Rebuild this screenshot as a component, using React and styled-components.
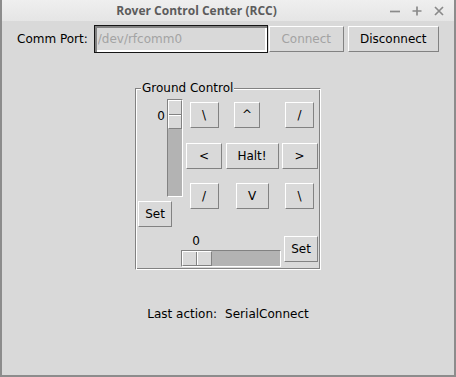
import React from "react";
import styled, { createGlobalStyle } from "styled-components";

const GlobalStyle = createGlobalStyle`
  body {
    margin: 0;
    background: #d9d9d9;
    font-family: "DejaVu Sans", sans-serif;
  }
`;

const Window = styled.div`
  box-sizing: border-box;
  width: 456px;
  height: 377px;
  border: 2px solid #8c8c8c;
  border-top: none;
  background: #d9d9d9;
  display: flex;
  flex-direction: column;
`;

const TitleBar = styled.div`
  height: 21px;
  display: grid;
  grid-template-columns: 1fr 66px;
  align-items: center;
  padding-right: 4px;
  background: linear-gradient(#efefef, #e5e5e5);
`;

const Title = styled.div`
  padding-left: 7px;
  text-align: center;
  font: bold 12px "Open Sans", sans-serif;
  color: #5c5c5c;
`;

const WinControls = styled.div`
  display: flex;
`;

const WinButton = styled.div`
  width: 22px;
  height: 21px;
  display: flex;
  align-items: center;
  justify-content: center;
  color: #8a8a8a;
`;

const TopRow = styled.div`
  display: flex;
  align-items: center;
  height: 28px;
  padding: 4px 0 0 15px;
`;

const Label = styled.span`
  font-size: 12px;
  line-height: 14px;
  color: #000;
  margin-right: ${p => p.$gap || 0}px;
`;

const PortEntry = styled.input`
  box-sizing: border-box;
  width: 174px;
  height: 28px;
  margin: 0;
  padding: 0 0 0 3px;
  font: 12px "DejaVu Sans", sans-serif;
  color: #a3a3a3;
  background: #d9d9d9;
  border: 1px solid #151515;
  box-shadow: inset 2px 2px 0 #828282, inset -2px -2px 0 #fff;
  outline: none;
  &:disabled {
    color: #a3a3a3;
  }
`;

const TkButton = styled.button`
  box-sizing: border-box;
  width: ${p => p.$w}px;
  height: 26px;
  margin: 0 0 0 ${p => p.$ml || 0}px;
  padding: 0;
  font: 12px "DejaVu Sans", sans-serif;
  color: #000;
  background: #d9d9d9;
  border: 1px solid;
  border-color: #fff #828282 #828282 #fff;
  &:disabled {
    color: #a3a3a3;
  }
`;

const GroupFrame = styled.div`
  position: relative;
  box-sizing: border-box;
  width: 186px;
  height: 182px;
  margin: 35px auto 0;
  padding: 10px 1px 1px 1px;
  border: 1px solid;
  border-color: #828282 #fff #fff #828282;
  box-shadow: inset 1px 1px 0 #fff, inset -1px -1px 0 #828282;
  display: grid;
  grid-template-columns: 47px 40px 56px 39px;
  grid-template-rows: 32px 50px 30px 18px 39px;
`;

const Legend = styled.span`
  position: absolute;
  left: 5px;
  top: -8px;
  padding: 0 1px;
  background: #d9d9d9;
  font-size: 12px;
  line-height: 14px;
`;

const Cell = styled.div`
  display: flex;
  grid-column: ${p => p.$col};
  grid-row: ${p => p.$row};
  justify-self: ${p => p.$jx || "center"};
  align-self: ${p => p.$jy || "center"};
  margin: ${p => p.$m || "0"};
`;

const Scale = styled.div`
  display: flex;
  flex-direction: ${p => (p.$vertical ? "row" : "column")};
  align-items: flex-start;
  gap: 2px;
`;

const ValueLabel = styled.span`
  width: ${p => (p.$vertical ? "auto" : "30px")};
  margin-top: ${p => (p.$vertical ? 10 : 0)}px;
  text-align: center;
  font-size: 12px;
  line-height: 14px;
`;

const Trough = styled.div`
  box-sizing: border-box;
  width: ${p => (p.$vertical ? 16 : 100)}px;
  height: ${p => (p.$vertical ? 98 : 17)}px;
  background: #b3b3b3;
  border: 1px solid;
  border-color: #828282 #fff #fff #828282;
  display: flex;
  flex-direction: ${p => (p.$vertical ? "column" : "row")};
`;

const Handle = styled.div`
  position: relative;
  box-sizing: border-box;
  flex: none;
  width: ${p => (p.$vertical ? "100%" : "30px")};
  height: ${p => (p.$vertical ? "29px" : "100%")};
  background: #d9d9d9;
  border: 1px solid;
  border-color: #fff #828282 #828282 #fff;
  &::after {
    content: "";
    position: absolute;
    box-sizing: border-box;
    ${p =>
      p.$vertical
        ? `left: 0; right: 0; top: 50%; height: 2px; margin-top: -1px;
           border-top: 1px solid #828282; border-bottom: 1px solid #fff;`
        : `top: 0; bottom: 0; left: 50%; width: 2px; margin-left: -1px;
           border-left: 1px solid #828282; border-right: 1px solid #fff;`}
  }
`;

const StatusRow = styled.div`
  display: flex;
  justify-content: center;
  gap: 8px;
  margin-top: 37px;
`;

const pad = [
  { t: "\\", w: 29, col: 2, row: 1 },
  { t: "^", w: 26, col: 3, row: 1, jx: "start", m: "0 0 0 10px" },
  { t: "/", w: 29, col: 4, row: 1 },
  { t: "<", w: 36, col: 2, row: 2 },
  { t: "Halt!", w: 53, col: 3, row: 2 },
  { t: ">", w: 36, col: 4, row: 2 },
  { t: "/", w: 29, col: 2, row: 3 },
  { t: "V", w: 33, col: 3, row: 3 },
  { t: "\\", w: 29, col: 4, row: 3 },
];

export default function App() {
  return (
    <>
      <GlobalStyle />
      <Window>
        <TitleBar>
          <Title>Rover Control Center (RCC)</Title>
          <WinControls>
            <WinButton>
              <svg width="10" height="10" viewBox="0 0 10 10">
                <path d="M0 5.5H10" stroke="currentColor" strokeWidth="1.7" />
              </svg>
            </WinButton>
            <WinButton>
              <svg width="10" height="10" viewBox="0 0 10 10">
                <path d="M0.5 5H9.5M5 0.5V9.5" stroke="currentColor" strokeWidth="1.7" />
              </svg>
            </WinButton>
            <WinButton>
              <svg width="10" height="10" viewBox="0 0 10 10">
                <path d="M1 1L9 9M9 1L1 9" stroke="currentColor" strokeWidth="1.7" />
              </svg>
            </WinButton>
          </WinControls>
        </TitleBar>

        <TopRow>
          <Label $gap={6}>Comm Port:</Label>
          <PortEntry value="/dev/rfcomm0" disabled readOnly />
          <TkButton $w={75} $ml={1} disabled>Connect</TkButton>
          <TkButton $w={91} $ml={4}>Disconnect</TkButton>
        </TopRow>

        <GroupFrame>
          <Legend>Ground Control</Legend>

          <Cell $col="1" $row="1 / 4" $jx="end" $jy="start" $m="0 1px 0 0">
            <Scale $vertical>
              <ValueLabel $vertical>0</ValueLabel>
              <Trough $vertical>
                <Handle $vertical />
              </Trough>
            </Scale>
          </Cell>

          <Cell $col="1" $row="3 / 5" $jx="start" $jy="end" $m="0 0 2px 1px">
            <TkButton $w={34}>Set</TkButton>
          </Cell>

          {pad.map((b, i) => (
            <Cell key={i} $col={b.col} $row={b.row} $jx={b.jx} $m={b.m}>
              <TkButton $w={b.w}>{b.t}</TkButton>
            </Cell>
          ))}

          <Cell $col="1 / 4" $row="5" $jx="end" $jy="end" $m="0 -1px 1px 0">
            <Scale>
              <ValueLabel>0</ValueLabel>
              <Trough>
                <Handle />
              </Trough>
            </Scale>
          </Cell>

          <Cell $col="4" $row="5" $jx="end" $m="0 1px 0 0">
            <TkButton $w={34}>Set</TkButton>
          </Cell>
        </GroupFrame>

        <StatusRow>
          <Label>Last action:</Label>
          <Label>SerialConnect</Label>
        </StatusRow>
      </Window>
    </>
  );
}
